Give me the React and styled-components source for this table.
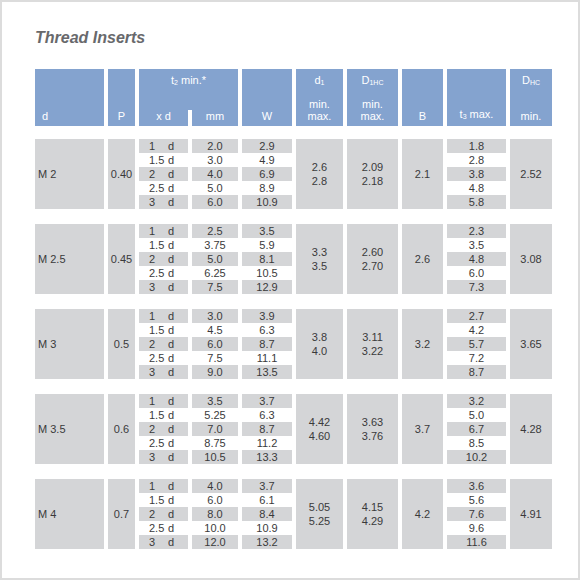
import React from 'react';
import styled, { createGlobalStyle } from 'styled-components';

const GlobalStyle = createGlobalStyle`
  html, body {
    margin: 0;
    padding: 0;
    background: #ffffff;
  }
`;

const COLUMNS = '69px 27px 49px 46px 50px 47px 51px 41px 59px 42px';

const Page = styled.div`
  box-sizing: border-box;
  width: 580px;
  height: 580px;
  border: 2px solid #dcdcdc;
  padding: 26px 0 0 33px;
  font-family: "Liberation Sans", Arial, sans-serif;
  background: #ffffff;
`;

const Title = styled.h1`
  margin: 0 0 21px;
  font-size: 16px;
  line-height: 20px;
  font-weight: bold;
  font-style: italic;
  color: #68696c;
`;

const Header = styled.div`
  display: grid;
  grid-template-columns: ${COLUMNS};
  grid-template-rows: 41px 16px;
  column-gap: 4px;
  margin-bottom: 13px;
`;

const HeadCell = styled.div`
  grid-column: ${p => p.$col};
  grid-row: ${p => p.$row || '1 / 3'};
  background: #84a3cf;
  color: #ffffff;
  font-size: 11px;
  line-height: 13px;
  display: flex;
  flex-direction: column;
  justify-content: ${p => (p.$top ? 'flex-start' : 'space-between')};
  text-align: ${p => (p.$left ? 'left' : 'center')};
  padding: ${p => (p.$tight ? '0' : '5px 0 4px')};
  padding-left: ${p => (p.$left ? '7px' : '0')};
  box-sizing: border-box;
`;

const HeadTop = styled.div`
  line-height: 12px;
  min-height: 12px;
`;

const HeadBottom = styled.div`
  line-height: 12px;
  padding-top: 2px;
`;

const Sub = styled.span`
  font-size: 7px;
  position: relative;
  top: 1px;
`;

const Group = styled.div`
  display: grid;
  grid-template-columns: ${COLUMNS};
  grid-template-rows: repeat(5, 14px);
  column-gap: 4px;
  margin-bottom: 15px;
  font-size: 11px;
  color: #3a3a3b;
`;

const BigCell = styled.div`
  grid-column: ${p => p.$col};
  grid-row: 1 / 6;
  background: #d4d5d7;
  display: flex;
  flex-direction: column;
  justify-content: center;
  align-items: ${p => (p.$left ? 'flex-start' : 'center')};
  padding-left: ${p => (p.$left ? '3px' : '0')};
  line-height: 14px;
`;

const RowCell = styled.div`
  grid-column: ${p => p.$col};
  grid-row: ${p => p.$row};
  background: ${p => (p.$row % 2 === 1 ? '#d4d5d7' : '#ffffff')};
  line-height: 14px;
  text-align: center;
`;

const FactorCell = styled(RowCell)`
  text-align: left;
  padding-left: 10px;
`;

const Factor = styled.span`
  display: inline-block;
  width: 19px;
`;

const FACTORS = ['1', '1.5', '2', '2.5', '3'];

const groups = [
  {
    d: 'M 2', p: '0.40',
    mm: ['2.0', '3.0', '4.0', '5.0', '6.0'],
    w: ['2.9', '4.9', '6.9', '8.9', '10.9'],
    d1: ['2.6', '2.8'], d1hc: ['2.09', '2.18'], b: '2.1',
    t3: ['1.8', '2.8', '3.8', '4.8', '5.8'], dhc: '2.52',
  },
  {
    d: 'M 2.5', p: '0.45',
    mm: ['2.5', '3.75', '5.0', '6.25', '7.5'],
    w: ['3.5', '5.9', '8.1', '10.5', '12.9'],
    d1: ['3.3', '3.5'], d1hc: ['2.60', '2.70'], b: '2.6',
    t3: ['2.3', '3.5', '4.8', '6.0', '7.3'], dhc: '3.08',
  },
  {
    d: 'M 3', p: '0.5',
    mm: ['3.0', '4.5', '6.0', '7.5', '9.0'],
    w: ['3.9', '6.3', '8.7', '11.1', '13.5'],
    d1: ['3.8', '4.0'], d1hc: ['3.11', '3.22'], b: '3.2',
    t3: ['2.7', '4.2', '5.7', '7.2', '8.7'], dhc: '3.65',
  },
  {
    d: 'M 3.5', p: '0.6',
    mm: ['3.5', '5.25', '7.0', '8.75', '10.5'],
    w: ['3.7', '6.3', '8.7', '11.2', '13.3'],
    d1: ['4.42', '4.60'], d1hc: ['3.63', '3.76'], b: '3.7',
    t3: ['3.2', '5.0', '6.7', '8.5', '10.2'], dhc: '4.28',
  },
  {
    d: 'M 4', p: '0.7',
    mm: ['4.0', '6.0', '8.0', '10.0', '12.0'],
    w: ['3.7', '6.1', '8.4', '10.9', '13.2'],
    d1: ['5.05', '5.25'], d1hc: ['4.15', '4.29'], b: '4.2',
    t3: ['3.6', '5.6', '7.6', '9.6', '11.6'], dhc: '4.91',
  },
];

const TableHeader = () => (
  <Header>
    <HeadCell $col="1" $left>
      <HeadTop />
      <HeadBottom>d</HeadBottom>
    </HeadCell>
    <HeadCell $col="2">
      <HeadTop />
      <HeadBottom>P</HeadBottom>
    </HeadCell>
    <HeadCell $col="3 / 5" $row="1" $top>
      <HeadTop>t<Sub>2</Sub> min.*</HeadTop>
    </HeadCell>
    <HeadCell $col="3" $row="2" $tight>x d</HeadCell>
    <HeadCell $col="4" $row="2" $tight>mm</HeadCell>
    <HeadCell $col="5">
      <HeadTop />
      <HeadBottom>W</HeadBottom>
    </HeadCell>
    <HeadCell $col="6">
      <HeadTop>d<Sub>1</Sub></HeadTop>
      <HeadBottom>min.<br />max.</HeadBottom>
    </HeadCell>
    <HeadCell $col="7">
      <HeadTop>D<Sub>1HC</Sub></HeadTop>
      <HeadBottom>min.<br />max.</HeadBottom>
    </HeadCell>
    <HeadCell $col="8">
      <HeadTop />
      <HeadBottom>B</HeadBottom>
    </HeadCell>
    <HeadCell $col="9">
      <HeadTop />
      <HeadBottom>t<Sub>3</Sub> max.</HeadBottom>
    </HeadCell>
    <HeadCell $col="10">
      <HeadTop>D<Sub>HC</Sub></HeadTop>
      <HeadBottom>min.</HeadBottom>
    </HeadCell>
  </Header>
);

const SizeGroup = ({ g }) => (
  <Group>
    <BigCell $col="1" $left>{g.d}</BigCell>
    <BigCell $col="2">{g.p}</BigCell>
    {FACTORS.map((f, i) => (
      <React.Fragment key={f}>
        <FactorCell $col="3" $row={i + 1}>
          <Factor>{f}</Factor>d
        </FactorCell>
        <RowCell $col="4" $row={i + 1}>{g.mm[i]}</RowCell>
        <RowCell $col="5" $row={i + 1}>{g.w[i]}</RowCell>
        <RowCell $col="9" $row={i + 1}>{g.t3[i]}</RowCell>
      </React.Fragment>
    ))}
    <BigCell $col="6">
      <div>{g.d1[0]}</div>
      <div>{g.d1[1]}</div>
    </BigCell>
    <BigCell $col="7">
      <div>{g.d1hc[0]}</div>
      <div>{g.d1hc[1]}</div>
    </BigCell>
    <BigCell $col="8">{g.b}</BigCell>
    <BigCell $col="10">{g.dhc}</BigCell>
  </Group>
);

const App = () => (
  <Page>
    <GlobalStyle />
    <Title>Thread Inserts</Title>
    <TableHeader />
    {groups.map(g => (
      <SizeGroup key={g.d} g={g} />
    ))}
  </Page>
);

export default App;
